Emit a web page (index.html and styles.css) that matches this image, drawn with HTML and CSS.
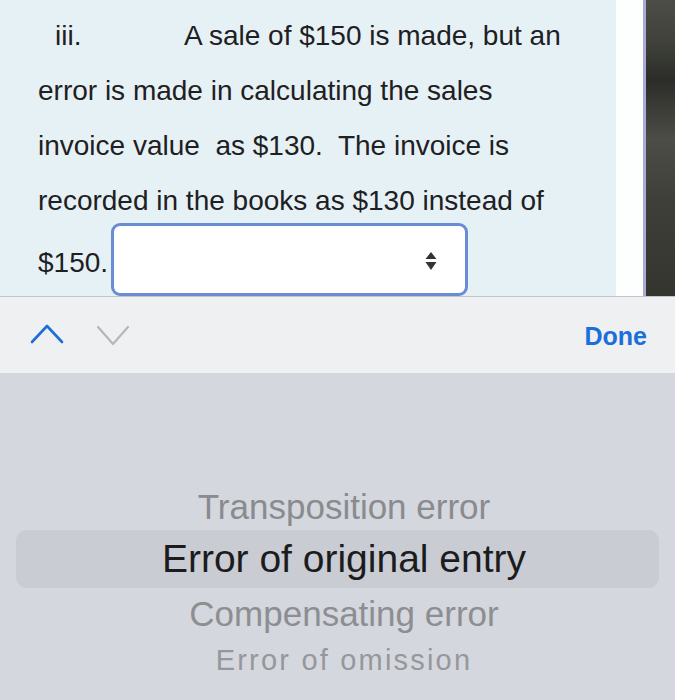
FILE: index.html
```html
<!DOCTYPE html>
<html>
<head>
<meta charset="utf-8">
<link rel="stylesheet" href="styles.css">
</head>
<body>
<div class="screen">
  <div class="top">
    <div class="content">
      <div class="para">
        <div class="line"><span class="num">iii.</span><span>A sale of $150 is made, but an</span></div>
        <div class="line">error is made in calculating the sales</div>
        <div class="line">invoice value&nbsp; as $130.&nbsp; The invoice is</div>
        <div class="line">recorded in the books as $130 instead of</div>
      </div>
      <div class="row">
        <span class="label">$150.</span>
        <div class="select">
          <svg class="updown" width="12" height="19" viewBox="0 0 12 19"><path d="M6 0 L11.5 7 L0.5 7 Z M0.5 10 L11.5 10 L6 18 Z" fill="#333"/></svg>
        </div>
      </div>
    </div>
    <div class="gap"></div>
    <div class="edge"></div>
  </div>
  <div class="toolbar">
    <div class="navs">
      <svg width="36" height="24" viewBox="0 0 36 24"><polyline points="3,19 18,3 33,19" fill="none" stroke="#1a6fd9" stroke-width="2.6" stroke-linecap="round" stroke-linejoin="round"/></svg>
      <svg width="36" height="24" viewBox="0 0 36 24"><polyline points="3,4 18,21 33,4" fill="none" stroke="#b6b7ba" stroke-width="2.2" stroke-linecap="round" stroke-linejoin="round"/></svg>
    </div>
    <span class="done">Done</span>
  </div>
  <div class="picker">
    <div class="opt o1">Transposition error</div>
    <div class="opt sel">Error of original entry</div>
    <div class="opt o3">Compensating error</div>
    <div class="opt o4">Error of omission</div>
  </div>
</div>
</body>
</html>
```
FILE: styles.css
```css
* { box-sizing: border-box; }
html, body { margin: 0; padding: 0; }
body {
  font-family: "Liberation Sans", Arial, sans-serif;
  background: #d4d7dd;
}
.screen {
  width: 675px;
  height: 700px;
  display: flex;
  flex-direction: column;
  overflow: hidden;
}
.top {
  height: 296px;
  display: flex;
  overflow: hidden;
}
.content {
  width: 616px;
  background: #e6f1f5;
  padding: 8px 0 0 38px;
  color: #1e2022;
  font-size: 28px;
}
.gap {
  width: 27px;
  background: #fdfefe;
}
.edge {
  flex: 1;
  border-left: 3px solid #a9abd6;
  background: linear-gradient(180deg, #4c4d46 0px, #40423b 40px, #2c2d28 80px, #4c4d47 140px, #3e3f39 200px, #34352f 296px);
}
.line {
  height: 55px;
  line-height: 55px;
  white-space: nowrap;
}
.num {
  display: inline-block;
  width: 146px;
  padding-left: 17px;
}
.row {
  display: flex;
  align-items: center;
  margin-top: -5px;
}
.label {
  padding-top: 6px;
}
.select {
  margin-left: 3px;
  width: 357px;
  height: 73px;
  background: #fff;
  border: 3px solid #6a8cd4;
  border-radius: 9px;
  display: flex;
  align-items: center;
  justify-content: flex-end;
  padding-right: 28px;
}
.updown { margin-top: 3px; }
.toolbar {
  height: 77px;
  background: #eff0f2;
  border-top: 1px solid #c5c6ca;
  display: flex;
  align-items: center;
  justify-content: space-between;
  padding: 0 28px 0 28px;
}
.navs {
  display: flex;
  gap: 30px;
  margin-left: 1px;
}
.done {
  color: #1a6fd9;
  font-weight: bold;
  font-size: 25px;
  margin-top: 2px;
}
.picker {
  flex: 1;
  background: #d4d7dd;
  display: flex;
  flex-direction: column;
  align-items: center;
  padding: 110px 16px 0 16px;
}
.opt {
  text-align: center;
  width: 100%;
  color: #8a8b8f;
  white-space: nowrap;
  padding-left: 13px;
}
.o1 { font-size: 35px; height: 47px; line-height: 47px; }
.sel {
  font-size: 39px;
  color: #1c1c1e;
  background: #c9ccd3;
  border-radius: 11px;
  height: 58px;
  line-height: 58px;
}
.o3 { font-size: 35px; height: 50px; line-height: 52px; color: #8d8e92; }
.o4 { font-size: 29px; height: 40px; line-height: 44px; color: #96979b; letter-spacing: 2.2px; }
```
